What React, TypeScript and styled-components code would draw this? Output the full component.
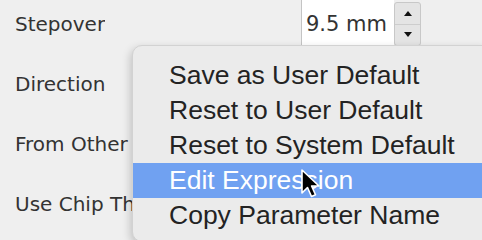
import React from "react";
import styled, { createGlobalStyle } from "styled-components";

const Global = createGlobalStyle`
  html, body { margin: 0; padding: 0; }
  body {
    width: 482px;
    height: 240px;
    overflow: hidden;
    background: #efefef;
    font-family: "DejaVu Sans", sans-serif;
  }
`;

const Page = styled.div`
  position: relative;
  width: 482px;
  height: 240px;
  overflow: hidden;
  background: #efefef;
`;

const Rows = styled.div`
  display: flex;
  flex-direction: column;
  gap: 12px;
  padding-left: 15px;
`;

const Row = styled.div`
  display: flex;
  align-items: center;
  height: 48px;
`;

const Label = styled.div`
  width: 286px;
  font-size: 20px;
  color: #333;
  white-space: nowrap;
`;

const Visible = styled.span<{ $clip?: boolean }>`
  display: inline-block;
  overflow: hidden;
  vertical-align: bottom;
  max-width: ${(p) => (p.$clip ? "117px" : "none")};
`;

const Field = styled.div`
  display: flex;
  align-items: stretch;
  height: 50px;
  margin-top: -6px;
`;

const Input = styled.div`
  width: 93px;
  background: #fff;
  border-left: 1px solid #c4c4c4;
  display: flex;
  align-items: center;
  padding-left: 4px;
  padding-top: 6px;
  font-size: 21px;
  color: #333;
  box-sizing: border-box;
`;

const Spinner = styled.div`
  width: 27px;
  margin-top: 6px;
  display: flex;
  flex-direction: column;
  background: #e4e4e4;
  border: 1px solid #c8c8c8;
  border-radius: 3px;
  box-sizing: border-box;
`;

const SpinBtn = styled.div<{ $down?: boolean }>`
  flex: 1;
  display: flex;
  align-items: center;
  justify-content: center;
  border-top: ${(p) => (p.$down ? "1px solid #cdcdcd" : "none")};
`;

const Tri = styled.div<{ $down?: boolean }>`
  width: 0;
  height: 0;
  border-left: 4px solid transparent;
  border-right: 4px solid transparent;
  ${(p) => (p.$down ? "border-top: 5px solid #111;" : "border-bottom: 5px solid #111;")}
`;

const Menu = styled.div`
  position: absolute;
  left: 132px;
  top: 45px;
  width: 360px;
  padding: 12px 0 8px;
  background: #ebebeb;
  border: 1px solid #d2d2d2;
  border-radius: 10px;
  box-shadow: -2px 3px 8px rgba(0, 0, 0, 0.18);
  box-sizing: border-box;
`;

const Item = styled.div<{ $active?: boolean }>`
  height: 35px;
  display: flex;
  align-items: center;
  padding-left: 36px;
  font-family: "Liberation Sans", Arial, sans-serif;
  font-size: 26.5px;
  color: ${(p) => (p.$active ? "#fff" : "#232323")};
  background: ${(p) => (p.$active ? "#70a1f1" : "transparent")};
  white-space: nowrap;
`;

const Cursor = styled.svg`
  position: absolute;
  left: 300px;
  top: 168px;
`;

const labels = ["Stepover", "Direction", "From Other Side", "Use Chip Thinning"];

const items = [
  "Save as User Default",
  "Reset to User Default",
  "Reset to System Default",
  "Edit Expression",
  "Copy Parameter Name",
];

function SpinField() {
  return (
    <Field>
      <Input>9.5 mm</Input>
      <Spinner>
        <SpinBtn>
          <Tri />
        </SpinBtn>
        <SpinBtn $down>
          <Tri $down />
        </SpinBtn>
      </Spinner>
    </Field>
  );
}

export default function App() {
  return (
    <Page>
      <Global />
      <Rows>
        {labels.map((l, i) => (
          <Row key={l}>
            <Label>
              <Visible $clip={i > 0}>{l}</Visible>
            </Label>
            {i === 0 && <SpinField />}
          </Row>
        ))}
      </Rows>
      <Menu>
        {items.map((t, i) => (
          <Item key={t} $active={i === 3}>
            {t}
          </Item>
        ))}
      </Menu>
      <Cursor width="28" height="34" viewBox="0 0 28 34">
        <path
          d="M2 2 L2 25 L7.5 19.5 L11.5 28.5 L15.5 26.8 L11.6 18 L19 18 Z"
          fill="#000"
          stroke="#fff"
          strokeWidth="1.6"
          strokeLinejoin="round"
        />
      </Cursor>
    </Page>
  );
}
